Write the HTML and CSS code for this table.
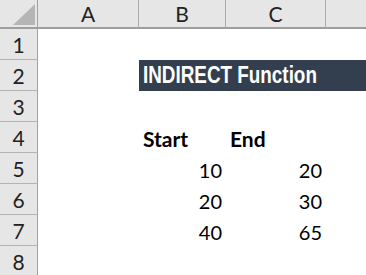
FILE: index.html
```html
<!DOCTYPE html>
<html>
<head>
<meta charset="utf-8">
<link rel="stylesheet" href="styles.css">
</head>
<body>
<div class="sheet">
  <div class="corner"><svg class="tri" width="22" height="21" viewBox="0 0 22 21"><polygon points="0,21 22,21 22,0" fill="#b5b5b5"/></svg></div>
  <div class="colhead">A</div>
  <div class="colhead">B</div>
  <div class="colhead">C</div>
  <div class="colhead last"></div>

  <div class="rowhead">1</div>
  <div class="cell"></div><div class="cell"></div><div class="cell"></div><div class="cell"></div>

  <div class="rowhead">2</div>
  <div class="cell"></div>
  <div class="cell band"><span class="title">INDIRECT Function</span></div>

  <div class="rowhead">3</div>
  <div class="cell"></div><div class="cell"></div><div class="cell"></div><div class="cell"></div>

  <div class="rowhead">4</div>
  <div class="cell"></div><div class="cell bold">Start</div><div class="cell bold">End</div><div class="cell"></div>

  <div class="rowhead">5</div>
  <div class="cell"></div><div class="cell num">10</div><div class="cell num">20</div><div class="cell"></div>

  <div class="rowhead">6</div>
  <div class="cell"></div><div class="cell num">20</div><div class="cell num">30</div><div class="cell"></div>

  <div class="rowhead">7</div>
  <div class="cell"></div><div class="cell num">40</div><div class="cell num">65</div><div class="cell"></div>

  <div class="rowhead">8</div>
  <div class="cell"></div><div class="cell"></div><div class="cell"></div><div class="cell"></div>
</div>
</body>
</html>
```
FILE: styles.css
```css
html, body {
  margin: 0;
  padding: 0;
  background: #ffffff;
}
body {
  width: 366px;
  height: 275px;
  overflow: hidden;
  font-family: Lato, "Open Sans", sans-serif;
}
.sheet {
  display: grid;
  grid-template-columns: 38px 101px 87px 100px 1fr;
  grid-template-rows: 29px repeat(8, 31px);
  width: 366px;
}
.corner, .colhead, .rowhead {
  background: #e6e6e6;
  box-sizing: border-box;
  color: #222;
  font-size: 21px;
  line-height: 20px;
}
.corner {
  border-right: 1px solid #a0a0a0;
  border-bottom: 2px solid #9e9e9e;
  position: relative;
}
.tri {
  position: absolute;
  left: 13px;
  top: 4px;
}
.colhead {
  border-right: 1px solid #ababab;
  border-bottom: 2px solid #9e9e9e;
  display: flex;
  align-items: flex-end;
  justify-content: center;
  padding-bottom: 3px;
}
.colhead.last {
  border-right: none;
}
.rowhead {
  border-right: 1px solid #a0a0a0;
  border-bottom: 1px solid #b4b4b4;
  display: flex;
  align-items: flex-end;
  justify-content: center;
  padding-bottom: 4px;
}
.cell {
  box-sizing: border-box;
  display: flex;
  align-items: flex-end;
  padding: 0 4px 4px 4px;
  font-size: 20px;
  line-height: 20px;
  color: #000;
  white-space: nowrap;
}
.bold {
  font-weight: 700;
  font-size: 21px;
}
.num {
  justify-content: flex-end;
}
.band {
  grid-column: 3 / 6;
  background: #333f4f;
  padding-bottom: 4px;
}
.title {
  display: inline-block;
  font-family: "Liberation Sans", Arial, sans-serif;
  font-weight: 700;
  font-size: 23px;
  line-height: 23px;
  color: #ffffff;
  transform: scaleX(0.82);
  transform-origin: left bottom;
}
```
